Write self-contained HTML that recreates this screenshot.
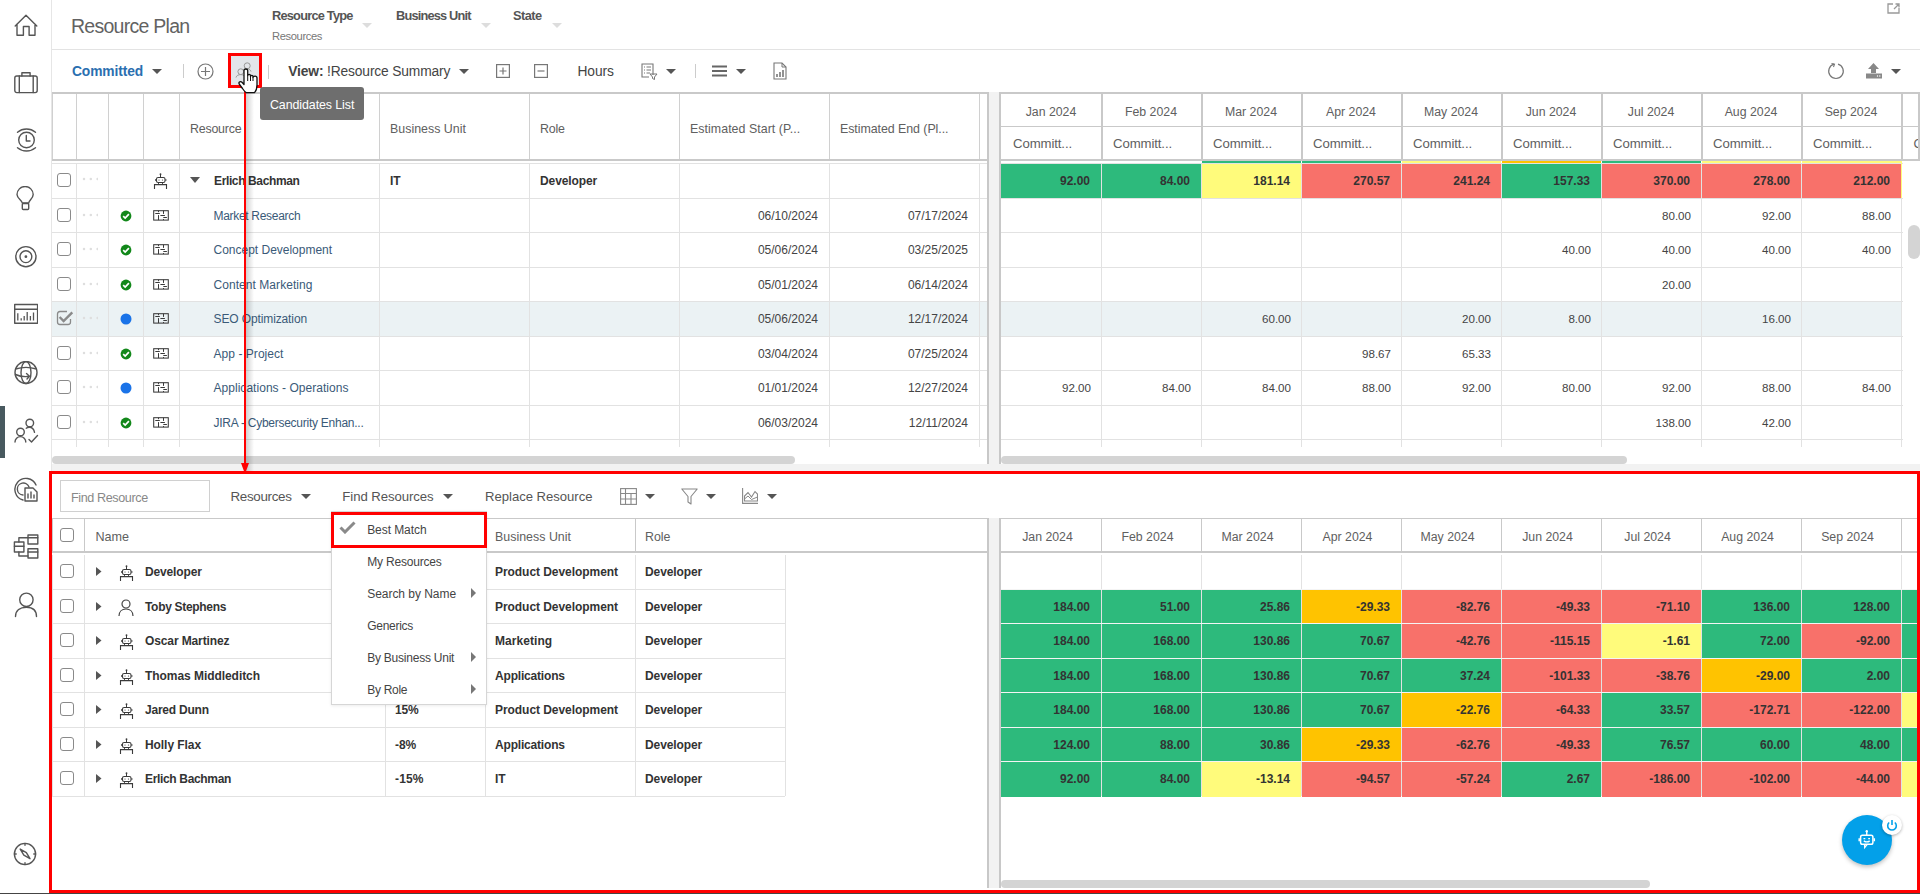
<!DOCTYPE html><html><head><meta charset="utf-8"><style>
*{margin:0;padding:0;box-sizing:border-box}
html,body{width:1920px;height:894px;overflow:hidden;background:#fff}
body{position:relative;font-family:"Liberation Sans",sans-serif;color:#333}
.a{position:absolute}
.t{white-space:nowrap;line-height:1}
.g{font-size:12.3px;color:#444}
.b{font-weight:bold;font-size:12px;letter-spacing:-0.2px;color:#333}
.lk{font-size:12px;letter-spacing:-0.2px;color:#3a5a78}
.cb{position:absolute;width:14px;height:14px;border:1.3px solid #8a8a8a;border-radius:3px;background:#fff}
</style></head><body>
<div class="a" style="left:51px;top:0px;width:1px;height:894px;background:#e6e6e6"></div>
<div class="a" style="left:0px;top:406px;width:5px;height:52px;background:#48595f"></div>
<svg class="a" style="left:14px;top:14px;" width="24" height="24" viewBox="0 0 24 24"><path d="M1.2 12L12 1.2L22.8 12M3 10V21.3H9.4V12.5H15.1V21.3H21V10" fill="none" stroke="#555" stroke-width="1.4" stroke-linejoin="round" stroke-linecap="round"/></svg>
<svg class="a" style="left:14px;top:71px;" width="24" height="24" viewBox="0 0 24 24"><rect x="0.8" y="5" width="22.4" height="16.6" rx="2" fill="none" stroke="#555" stroke-width="1.4" stroke-linejoin="round" stroke-linecap="round"/><path d="M7.9 5V1.8H16.1V5M5.3 5V21.6M19.2 5V21.6" fill="none" stroke="#555" stroke-width="1.4" stroke-linejoin="round" stroke-linecap="round"/></svg>
<svg class="a" style="left:14px;top:128px;" width="26" height="26" viewBox="0 0 26 26"><circle cx="12.5" cy="12" r="7.8" fill="none" stroke="#555" stroke-width="1.4" stroke-linejoin="round" stroke-linecap="round"/><path d="M12.3 7.5V13H16" fill="none" stroke="#555" stroke-width="1.4" stroke-linejoin="round" stroke-linecap="round"/><path d="M3.5 4.3A14 14 0 0 1 21.5 4.3M3.5 19.7A14 14 0 0 0 21.5 19.7" fill="none" stroke="#555" stroke-width="1.4" stroke-linejoin="round" stroke-linecap="round"/></svg>
<svg class="a" style="left:14px;top:186px;" width="24" height="26" viewBox="0 0 24 26"><path d="M8.3 17C8.3 14.5 3 12.5 3 8.6A8.1 8.1 0 0 1 19.2 8.6C19.2 12.5 14.7 14.5 14.7 17Z" fill="none" stroke="#555" stroke-width="1.4" stroke-linejoin="round" stroke-linecap="round"/><rect x="8.3" y="17.5" width="6.4" height="6" rx="1" fill="none" stroke="#555" stroke-width="1.4" stroke-linejoin="round" stroke-linecap="round"/></svg>
<svg class="a" style="left:14px;top:245px;" width="24" height="24" viewBox="0 0 24 24"><circle cx="11.9" cy="11.7" r="10.1" fill="none" stroke="#555" stroke-width="1.4" stroke-linejoin="round" stroke-linecap="round"/><circle cx="11.9" cy="11.7" r="5.9" fill="none" stroke="#555" stroke-width="1.4" stroke-linejoin="round" stroke-linecap="round"/><circle cx="11.9" cy="11.7" r="1.4" fill="#555"/></svg>
<svg class="a" style="left:14px;top:303px;" width="24" height="22" viewBox="0 0 24 22"><rect x="0.7" y="1.5" width="22.9" height="18.7" fill="none" stroke="#555" stroke-width="1.4" stroke-linejoin="round" stroke-linecap="round"/><path d="M0.7 6.3H23.6" fill="none" stroke="#555" stroke-width="1.4" stroke-linejoin="round" stroke-linecap="round"/><path d="M3.8 17.5V10.2M7.2 17.5V15.2M10.2 17.5V13M13.2 17.5V9M16.4 17.5V13M19.5 17.5V9.5" fill="none" stroke="#555" stroke-width="1.3"/></svg>
<svg class="a" style="left:14px;top:361px;" width="24" height="24" viewBox="0 0 24 24"><circle cx="12" cy="11.5" r="11" fill="none" stroke="#555" stroke-width="1.4" stroke-linejoin="round" stroke-linecap="round"/><ellipse cx="12" cy="11.5" rx="5" ry="11" fill="none" stroke="#555" stroke-width="1.4" stroke-linejoin="round" stroke-linecap="round" stroke-width="1.3"/><path d="M1.6 8Q12 4.8 22.4 8M1.5 13.5Q8 16.5 15.5 15.3M12.5 12.6L15.5 15.3L13 18" fill="none" stroke="#555" stroke-width="1.4" stroke-linejoin="round" stroke-linecap="round" stroke-width="1.3"/></svg>
<svg class="a" style="left:14px;top:417px;" width="26" height="27" viewBox="0 0 26 27"><circle cx="6.5" cy="15" r="3.8" fill="none" stroke="#555" stroke-width="1.4" stroke-linejoin="round" stroke-linecap="round"/><circle cx="15.8" cy="6" r="3.8" fill="none" stroke="#555" stroke-width="1.4" stroke-linejoin="round" stroke-linecap="round"/><path d="M1 25A5.3 5.3 0 0 1 11.8 25M12.2 11.2C13 10.6 14 10.2 15.2 10.2C17.8 10.2 20 12.2 20.5 15.3M15 22.5L17.5 25L23.5 18.5" fill="none" stroke="#555" stroke-width="1.4" stroke-linejoin="round" stroke-linecap="round"/></svg>
<svg class="a" style="left:13px;top:477px;" width="26" height="26" viewBox="0 0 26 26"><path d="M10 23A11 11 0 1 1 23 8" fill="none" stroke="#555" stroke-width="1.4" stroke-linejoin="round" stroke-linecap="round"/><path d="M10 18A6 6 0 1 1 16 10" fill="none" stroke="#555" stroke-width="1.4" stroke-linejoin="round" stroke-linecap="round"/><path d="M12 11H20L24 15V24H12Z" fill="none" stroke="#555" stroke-width="1.4" stroke-linejoin="round" stroke-linecap="round"/><path d="M15 21V17M18 21V15M21 21V18" fill="none" stroke="#555" stroke-width="1.4" stroke-linejoin="round" stroke-linecap="round" stroke-width="1.4"/></svg>
<svg class="a" style="left:13px;top:534px;" width="26" height="26" viewBox="0 0 26 26"><rect x="1.4" y="8" width="9.5" height="10" fill="none" stroke="#555" stroke-width="1.4" stroke-linejoin="round" stroke-linecap="round"/><rect x="15" y="1" width="9.8" height="9" fill="none" stroke="#555" stroke-width="1.4" stroke-linejoin="round" stroke-linecap="round"/><rect x="15" y="14.7" width="9.8" height="9.3" fill="none" stroke="#555" stroke-width="1.4" stroke-linejoin="round" stroke-linecap="round"/><path d="M1.4 12.2H10.9M15 3.8H24.8M15 18H24.8M5.9 8V3.8H15M5.9 18V22H15" fill="none" stroke="#555" stroke-width="1.4" stroke-linejoin="round" stroke-linecap="round" stroke-width="1.3"/></svg>
<svg class="a" style="left:14px;top:587px;" width="24" height="31" viewBox="0 0 24 31"><circle cx="12.4" cy="12.8" r="6.7" fill="none" stroke="#555" stroke-width="1.4" stroke-linejoin="round" stroke-linecap="round"/><path d="M1.5 29.6C1.5 23.5 6 20.3 12.4 20.3C18.8 20.3 22.5 23.5 22.5 29.6" fill="none" stroke="#555" stroke-width="1.4" stroke-linejoin="round" stroke-linecap="round"/></svg>
<svg class="a" style="left:13px;top:842px;" width="24" height="24" viewBox="0 0 24 24"><circle cx="12" cy="12" r="10.6" fill="none" stroke="#555" stroke-width="1.4" stroke-linejoin="round" stroke-linecap="round" stroke-width="1.4"/><path d="M12 1.4V3.2M12 20.8V22.6M1.4 12H3.2M20.8 12H22.6" fill="none" stroke="#555" stroke-width="1.4" stroke-linejoin="round" stroke-linecap="round" stroke-width="1.3"/><path d="M7.2 7.1L10.84 13.18L17 16.7L13.36 10.62Z" fill="none" stroke="#555" stroke-width="1.4" stroke-linejoin="round" stroke-linecap="round" stroke-width="1.3"/></svg>
<div class="a" style="left:52px;top:49px;width:1868px;height:1px;background:#e3e3e3"></div>
<div class="a t " style="left:71px;top:17.00px;font-size:19.5px;color:#626262;letter-spacing:-0.731px">Resource Plan</div>
<div class="a t " style="left:272px;top:10.00px;font-size:12.8px;font-weight:bold;color:#555;letter-spacing:-0.784px">Resource Type</div>
<div class="a t " style="left:272px;top:31.00px;font-size:11.2px;color:#777;letter-spacing:-0.387px">Resources</div>
<svg class="a" style="left:362.0px;top:23.0px;" width="10" height="5" viewBox="0 0 10 5"><path d="M0 0H10L5.0 5Z" fill="#ddd"/></svg>
<div class="a t " style="left:396px;top:10.00px;font-size:12.8px;font-weight:bold;color:#555;letter-spacing:-0.819px">Business Unit</div>
<svg class="a" style="left:481.0px;top:23.0px;" width="10" height="5" viewBox="0 0 10 5"><path d="M0 0H10L5.0 5Z" fill="#ddd"/></svg>
<div class="a t " style="left:513px;top:10.00px;font-size:12.8px;font-weight:bold;color:#555;letter-spacing:-0.519px">State</div>
<svg class="a" style="left:552.0px;top:23.0px;" width="10" height="5" viewBox="0 0 10 5"><path d="M0 0H10L5.0 5Z" fill="#ddd"/></svg>
<svg class="a" style="left:1887px;top:3px;" width="13" height="11" viewBox="0 0 13 11"><path d="M6 1H1V10H12V5M7 6L12 1M8.5 1H12V4.5" fill="none" stroke="#999" stroke-width="1.3"/></svg>
<div class="a t " style="left:72px;top:65.00px;font-size:13.8px;font-weight:bold;color:#2a6fb0;letter-spacing:-0.096px">Committed</div>
<svg class="a" style="left:152.0px;top:68.5px;" width="10" height="5" viewBox="0 0 10 5"><path d="M0 0H10L5.0 5Z" fill="#555"/></svg>
<div class="a" style="left:183px;top:64px;width:1px;height:14px;background:#ccc"></div>
<svg class="a" style="left:197px;top:63px;" width="17" height="17" viewBox="0 0 17 17"><circle cx="8.5" cy="8.5" r="7.5" fill="none" stroke="#777" stroke-width="1.2"/><path d="M8.5 4V13M4 8.5H13" stroke="#777" stroke-width="1.2"/></svg>
<div class="a" style="left:231px;top:56px;width:28px;height:29px;background:#e3e5ea"></div>
<svg class="a" style="left:234px;top:60px;" width="20" height="20" viewBox="0 0 20 20"><circle cx="13.2" cy="5.8" r="3" fill="none" stroke="#999" stroke-width="1"/><circle cx="6.8" cy="11.7" r="2.9" fill="none" stroke="#999" stroke-width="1"/><path d="M2 17.5C2.5 15.5 4.5 14.6 6.8 14.6C8 14.6 9 15 9.8 15.5M9.5 10.5C10.5 9.3 11.8 8.8 13.2 8.8C15 8.8 16.5 9.8 17 11.5" fill="none" stroke="#999" stroke-width="1"/></svg>
<div class="a" style="left:268px;top:65px;width:1px;height:14px;background:#ccc"></div>
<div class="a t " style="left:288.3px;top:65.00px;font-size:13.8px;color:#444;letter-spacing:-0.147px"><b>View:</b> !Resource Summary</div>
<svg class="a" style="left:459.0px;top:68.5px;" width="10" height="5" viewBox="0 0 10 5"><path d="M0 0H10L5.0 5Z" fill="#555"/></svg>
<svg class="a" style="left:496px;top:64px;" width="14" height="14" viewBox="0 0 14 14"><rect x="0.6" y="0.6" width="12.8" height="12.8" fill="none" stroke="#777" stroke-width="1.2"/><path d="M7 3.5V10.5M3.5 7H10.5" stroke="#777" stroke-width="1.2"/></svg>
<svg class="a" style="left:534px;top:64px;" width="14" height="14" viewBox="0 0 14 14"><rect x="0.6" y="0.6" width="12.8" height="12.8" fill="none" stroke="#777" stroke-width="1.2"/><path d="M3.5 7H10.5" stroke="#777" stroke-width="1.2"/></svg>
<div class="a t " style="left:577.5px;top:65.00px;font-size:13.8px;color:#444;letter-spacing:-0.113px">Hours</div>
<svg class="a" style="left:641px;top:63px;" width="17" height="17" viewBox="0 0 17 17"><path d="M12 12V1H1V14H8" fill="none" stroke="#777" stroke-width="1.1"/><path d="M3 4H4M5.5 4H10M3 7H4M5.5 7H10M3 10H4M5.5 10H9" stroke="#777" stroke-width="1"/><path d="M9 11H16L13.5 14V16.5L11.5 15.5V14Z" fill="none" stroke="#777" stroke-width="1"/></svg>
<svg class="a" style="left:666.0px;top:68.5px;" width="10" height="5" viewBox="0 0 10 5"><path d="M0 0H10L5.0 5Z" fill="#555"/></svg>
<div class="a" style="left:695px;top:64px;width:1px;height:14px;background:#ccc"></div>
<svg class="a" style="left:712px;top:65px;" width="15" height="12" viewBox="0 0 15 12"><path d="M0 1.5H15M0 6H15M0 10.5H15" stroke="#666" stroke-width="1.8"/></svg>
<svg class="a" style="left:736.0px;top:68.5px;" width="10" height="5" viewBox="0 0 10 5"><path d="M0 0H10L5.0 5Z" fill="#555"/></svg>
<svg class="a" style="left:773px;top:62px;" width="14" height="18" viewBox="0 0 14 18"><path d="M1 1H9L13 5V17H1Z" fill="none" stroke="#777" stroke-width="1.1"/><path d="M9 1V5H13" fill="none" stroke="#777" stroke-width="1"/><path d="M4 15V12M7 15V10M10 15V8" stroke="#777" stroke-width="1.6"/></svg>
<svg class="a" style="left:1827px;top:62px;" width="18" height="18" viewBox="0 0 18 18"><path d="M7 2.2A7.3 7.3 0 1 0 11 2.2" fill="none" stroke="#777" stroke-width="1.2"/><path d="M4.5 1.5L7.5 2.2L6.5 5" fill="none" stroke="#777" stroke-width="1.1"/></svg>
<svg class="a" style="left:1865px;top:63px;" width="18" height="16" viewBox="0 0 18 16"><path d="M8.5 0L14 6H11V10H6V6H3Z" fill="#888"/><rect x="1" y="10.5" width="16" height="5" fill="#888"/><circle cx="12.5" cy="13" r="0.7" fill="#fff"/><circle cx="14.8" cy="13" r="0.7" fill="#fff"/></svg>
<svg class="a" style="left:1891.0px;top:68.5px;" width="10" height="5" viewBox="0 0 10 5"><path d="M0 0H10L5.0 5Z" fill="#555"/></svg>
<div class="a" style="left:52px;top:302px;width:935px;height:34px;background:#ebf2f4"></div>
<div class="a" style="left:1001px;top:302px;width:900px;height:34px;background:#ebf2f4"></div>
<div class="a" style="left:52px;top:92px;width:1868px;height:2px;background:#c9c9c9"></div>
<div class="a" style="left:52px;top:94px;width:1px;height:66px;background:#d0d0d0"></div>
<div class="a" style="left:76px;top:94px;width:1px;height:66px;background:#d0d0d0"></div>
<div class="a" style="left:108px;top:94px;width:1px;height:66px;background:#d0d0d0"></div>
<div class="a" style="left:143px;top:94px;width:1px;height:66px;background:#d0d0d0"></div>
<div class="a" style="left:179px;top:94px;width:1px;height:66px;background:#d0d0d0"></div>
<div class="a" style="left:379px;top:94px;width:1px;height:66px;background:#d0d0d0"></div>
<div class="a" style="left:529px;top:94px;width:1px;height:66px;background:#d0d0d0"></div>
<div class="a" style="left:679px;top:94px;width:1px;height:66px;background:#d0d0d0"></div>
<div class="a" style="left:829px;top:94px;width:1px;height:66px;background:#d0d0d0"></div>
<div class="a" style="left:979px;top:94px;width:1px;height:66px;background:#d0d0d0"></div>
<div class="a" style="left:52px;top:159px;width:935px;height:2px;background:#c9c9c9"></div>
<div class="a" style="left:52px;top:163px;width:935px;height:1px;background:#e2e2e2"></div>
<div class="a" style="left:52px;top:198px;width:935px;height:1px;background:#e2e2e2"></div>
<div class="a" style="left:52px;top:232px;width:935px;height:1px;background:#e2e2e2"></div>
<div class="a" style="left:52px;top:267px;width:935px;height:1px;background:#e2e2e2"></div>
<div class="a" style="left:52px;top:301px;width:935px;height:1px;background:#e2e2e2"></div>
<div class="a" style="left:52px;top:336px;width:935px;height:1px;background:#e2e2e2"></div>
<div class="a" style="left:52px;top:370px;width:935px;height:1px;background:#e2e2e2"></div>
<div class="a" style="left:52px;top:405px;width:935px;height:1px;background:#e2e2e2"></div>
<div class="a" style="left:52px;top:439px;width:935px;height:1px;background:#e2e2e2"></div>
<div class="a" style="left:76px;top:163px;width:1px;height:284px;background:#e2e2e2"></div>
<div class="a" style="left:108px;top:163px;width:1px;height:284px;background:#e2e2e2"></div>
<div class="a" style="left:143px;top:163px;width:1px;height:284px;background:#e2e2e2"></div>
<div class="a" style="left:179px;top:163px;width:1px;height:284px;background:#e2e2e2"></div>
<div class="a" style="left:379px;top:163px;width:1px;height:284px;background:#e2e2e2"></div>
<div class="a" style="left:529px;top:163px;width:1px;height:284px;background:#e2e2e2"></div>
<div class="a" style="left:679px;top:163px;width:1px;height:284px;background:#e2e2e2"></div>
<div class="a" style="left:829px;top:163px;width:1px;height:284px;background:#e2e2e2"></div>
<div class="a" style="left:979px;top:163px;width:1px;height:284px;background:#e2e2e2"></div>
<div class="a" style="left:987px;top:92px;width:2px;height:372px;background:#c8c8c8"></div>
<div class="a" style="left:989px;top:92px;width:10px;height:380px;background:#f2f2f2"></div>
<div class="a" style="left:999px;top:92px;width:2px;height:372px;background:#c8c8c8"></div>
<div class="a t " style="left:190px;top:123.00px;font-size:12.4px;color:#606060;letter-spacing:-0.216px">Resource</div>
<div class="a t " style="left:390px;top:123.00px;font-size:12.4px;color:#606060;letter-spacing:0.010px">Business Unit</div>
<div class="a t " style="left:540px;top:123.00px;font-size:12.4px;color:#606060;letter-spacing:-0.196px">Role</div>
<div class="a t " style="left:690px;top:123.00px;font-size:12.4px;color:#606060;letter-spacing:0.044px">Estimated Start (P...</div>
<div class="a t " style="left:840px;top:123.00px;font-size:12.4px;color:#606060;letter-spacing:-0.050px">Estimated End (Pl...</div>
<div class="cb" style="left:57px;top:173px"></div>
<svg class="a" style="left:82px;top:177px;" width="16" height="4" viewBox="0 0 16 4"><circle cx="2" cy="2" r="1.25" fill="#dedede"/><circle cx="8.8" cy="2" r="1.25" fill="#dedede"/><circle cx="15.6" cy="2" r="1.25" fill="#dedede"/></svg>
<svg class="a" style="left:152px;top:172px;" width="17" height="18" viewBox="0 0 17 18"><circle cx="8.5" cy="2.2" r="0.9" fill="#3a3a3a"/><path d="M8.5 2.5V5.2" stroke="#3a3a3a" stroke-width="1"/><rect x="4.5" y="5.5" width="8.5" height="5" rx="1.6" fill="none" stroke="#3a3a3a" stroke-width="1.1"/><path d="M3.6 7.2V8.8M13.9 7.2V8.8" stroke="#3a3a3a" stroke-width="1.1"/><circle cx="7" cy="8" r="0.6" fill="#3a3a3a"/><circle cx="10.5" cy="8" r="0.6" fill="#3a3a3a"/><path d="M6.5 10.5V12.5M10.5 10.5V12.5" stroke="#3a3a3a" stroke-width="0.9"/><path d="M2.5 17V12.6H14.5V17" fill="none" stroke="#3a3a3a" stroke-width="1.1"/></svg>
<svg class="a" style="left:189.5px;top:177.0px;" width="10" height="6" viewBox="0 0 10 6"><path d="M0 0H10L5.0 6Z" fill="#555"/></svg>
<div class="a t b" style="left:214px;top:175.00px;font-size:12px;;letter-spacing:-0.372px">Erlich Bachman</div>
<div class="a t b" style="left:390px;top:175.00px;font-size:12px;">IT</div>
<div class="a t b" style="left:540px;top:175.00px;font-size:12px;;letter-spacing:-0.092px">Developer</div>
<div class="cb" style="left:57px;top:208px"></div>
<svg class="a" style="left:82px;top:212.5px;" width="16" height="4" viewBox="0 0 16 4"><circle cx="2" cy="2" r="1.25" fill="#dedede"/><circle cx="8.8" cy="2" r="1.25" fill="#dedede"/><circle cx="15.6" cy="2" r="1.25" fill="#dedede"/></svg>
<svg class="a" style="left:119.5px;top:209.5px;" width="12" height="12" viewBox="0 0 12 12"><circle cx="6" cy="6" r="5.4" fill="#12881a"/><path d="M3.2 6.2L5.2 8.1L8.9 4.2" fill="none" stroke="#fff" stroke-width="1.7"/></svg>
<svg class="a" style="left:152px;top:208px;" width="18" height="14" viewBox="0 0 18 14"><rect x="1.7" y="2.7" width="14.6" height="9.4" fill="none" stroke="#3a3a3a" stroke-width="1.05"/><path d="M3.3 5.5H7.8M6.5 7.1V12.1M6.5 2.7V4.2M11.5 2.7V5.9M8.4 7.5H12.9M11.3 9.5H14.9M11.5 11V12.1" fill="none" stroke="#3a3a3a" stroke-width="1"/></svg>
<div class="a t lk" style="left:213.5px;top:210.00px;font-size:12px;;letter-spacing:-0.305px">Market Research</div>
<div class="a t " style="right:1102px;top:210.00px;font-size:12px;color:#444">06/10/2024</div>
<div class="a t " style="right:952px;top:210.00px;font-size:12px;color:#444">07/17/2024</div>
<div class="cb" style="left:57px;top:242px"></div>
<svg class="a" style="left:82px;top:246.5px;" width="16" height="4" viewBox="0 0 16 4"><circle cx="2" cy="2" r="1.25" fill="#dedede"/><circle cx="8.8" cy="2" r="1.25" fill="#dedede"/><circle cx="15.6" cy="2" r="1.25" fill="#dedede"/></svg>
<svg class="a" style="left:119.5px;top:243.5px;" width="12" height="12" viewBox="0 0 12 12"><circle cx="6" cy="6" r="5.4" fill="#12881a"/><path d="M3.2 6.2L5.2 8.1L8.9 4.2" fill="none" stroke="#fff" stroke-width="1.7"/></svg>
<svg class="a" style="left:152px;top:242px;" width="18" height="14" viewBox="0 0 18 14"><rect x="1.7" y="2.7" width="14.6" height="9.4" fill="none" stroke="#3a3a3a" stroke-width="1.05"/><path d="M3.3 5.5H7.8M6.5 7.1V12.1M6.5 2.7V4.2M11.5 2.7V5.9M8.4 7.5H12.9M11.3 9.5H14.9M11.5 11V12.1" fill="none" stroke="#3a3a3a" stroke-width="1"/></svg>
<div class="a t lk" style="left:213.5px;top:244.00px;font-size:12px;;letter-spacing:-0.007px">Concept Development</div>
<div class="a t " style="right:1102px;top:244.00px;font-size:12px;color:#444">05/06/2024</div>
<div class="a t " style="right:952px;top:244.00px;font-size:12px;color:#444">03/25/2025</div>
<div class="cb" style="left:57px;top:277px"></div>
<svg class="a" style="left:82px;top:281.5px;" width="16" height="4" viewBox="0 0 16 4"><circle cx="2" cy="2" r="1.25" fill="#dedede"/><circle cx="8.8" cy="2" r="1.25" fill="#dedede"/><circle cx="15.6" cy="2" r="1.25" fill="#dedede"/></svg>
<svg class="a" style="left:119.5px;top:278.5px;" width="12" height="12" viewBox="0 0 12 12"><circle cx="6" cy="6" r="5.4" fill="#12881a"/><path d="M3.2 6.2L5.2 8.1L8.9 4.2" fill="none" stroke="#fff" stroke-width="1.7"/></svg>
<svg class="a" style="left:152px;top:277px;" width="18" height="14" viewBox="0 0 18 14"><rect x="1.7" y="2.7" width="14.6" height="9.4" fill="none" stroke="#3a3a3a" stroke-width="1.05"/><path d="M3.3 5.5H7.8M6.5 7.1V12.1M6.5 2.7V4.2M11.5 2.7V5.9M8.4 7.5H12.9M11.3 9.5H14.9M11.5 11V12.1" fill="none" stroke="#3a3a3a" stroke-width="1"/></svg>
<div class="a t lk" style="left:213.5px;top:279.00px;font-size:12px;;letter-spacing:0.055px">Content Marketing</div>
<div class="a t " style="right:1102px;top:279.00px;font-size:12px;color:#444">05/01/2024</div>
<div class="a t " style="right:952px;top:279.00px;font-size:12px;color:#444">06/14/2024</div>
<svg class="a" style="left:56px;top:310px;" width="18" height="17" viewBox="0 0 18 17"><path d="M11 1.5H4Q1.5 1.5 1.5 4V12Q1.5 14.5 4 14.5H12Q14.5 14.5 14.5 12V9" fill="none" stroke="#8a8a8a" stroke-width="1.3"/><path d="M3.6 7L7.6 11.1L16.3 2.3" fill="none" stroke="#8a8a8a" stroke-width="2.4"/></svg>
<svg class="a" style="left:82px;top:315.5px;" width="16" height="4" viewBox="0 0 16 4"><circle cx="2" cy="2" r="1.25" fill="#dedede"/><circle cx="8.8" cy="2" r="1.25" fill="#dedede"/><circle cx="15.6" cy="2" r="1.25" fill="#dedede"/></svg>
<svg class="a" style="left:119.5px;top:312.5px;" width="12" height="12" viewBox="0 0 12 12"><circle cx="6" cy="6" r="5.5" fill="#1a73e8"/></svg>
<svg class="a" style="left:152px;top:311px;" width="18" height="14" viewBox="0 0 18 14"><rect x="1.7" y="2.7" width="14.6" height="9.4" fill="none" stroke="#3a3a3a" stroke-width="1.05"/><path d="M3.3 5.5H7.8M6.5 7.1V12.1M6.5 2.7V4.2M11.5 2.7V5.9M8.4 7.5H12.9M11.3 9.5H14.9M11.5 11V12.1" fill="none" stroke="#3a3a3a" stroke-width="1"/></svg>
<div class="a t lk" style="left:213.5px;top:313.00px;font-size:12px;;letter-spacing:-0.117px">SEO Optimization</div>
<div class="a t " style="right:1102px;top:313.00px;font-size:12px;color:#444">05/06/2024</div>
<div class="a t " style="right:952px;top:313.00px;font-size:12px;color:#444">12/17/2024</div>
<div class="cb" style="left:57px;top:346px"></div>
<svg class="a" style="left:82px;top:350.5px;" width="16" height="4" viewBox="0 0 16 4"><circle cx="2" cy="2" r="1.25" fill="#dedede"/><circle cx="8.8" cy="2" r="1.25" fill="#dedede"/><circle cx="15.6" cy="2" r="1.25" fill="#dedede"/></svg>
<svg class="a" style="left:119.5px;top:347.5px;" width="12" height="12" viewBox="0 0 12 12"><circle cx="6" cy="6" r="5.4" fill="#12881a"/><path d="M3.2 6.2L5.2 8.1L8.9 4.2" fill="none" stroke="#fff" stroke-width="1.7"/></svg>
<svg class="a" style="left:152px;top:346px;" width="18" height="14" viewBox="0 0 18 14"><rect x="1.7" y="2.7" width="14.6" height="9.4" fill="none" stroke="#3a3a3a" stroke-width="1.05"/><path d="M3.3 5.5H7.8M6.5 7.1V12.1M6.5 2.7V4.2M11.5 2.7V5.9M8.4 7.5H12.9M11.3 9.5H14.9M11.5 11V12.1" fill="none" stroke="#3a3a3a" stroke-width="1"/></svg>
<div class="a t lk" style="left:213.5px;top:348.00px;font-size:12px;;letter-spacing:0.048px">App - Project</div>
<div class="a t " style="right:1102px;top:348.00px;font-size:12px;color:#444">03/04/2024</div>
<div class="a t " style="right:952px;top:348.00px;font-size:12px;color:#444">07/25/2024</div>
<div class="cb" style="left:57px;top:380px"></div>
<svg class="a" style="left:82px;top:384.5px;" width="16" height="4" viewBox="0 0 16 4"><circle cx="2" cy="2" r="1.25" fill="#dedede"/><circle cx="8.8" cy="2" r="1.25" fill="#dedede"/><circle cx="15.6" cy="2" r="1.25" fill="#dedede"/></svg>
<svg class="a" style="left:119.5px;top:381.5px;" width="12" height="12" viewBox="0 0 12 12"><circle cx="6" cy="6" r="5.5" fill="#1a73e8"/></svg>
<svg class="a" style="left:152px;top:380px;" width="18" height="14" viewBox="0 0 18 14"><rect x="1.7" y="2.7" width="14.6" height="9.4" fill="none" stroke="#3a3a3a" stroke-width="1.05"/><path d="M3.3 5.5H7.8M6.5 7.1V12.1M6.5 2.7V4.2M11.5 2.7V5.9M8.4 7.5H12.9M11.3 9.5H14.9M11.5 11V12.1" fill="none" stroke="#3a3a3a" stroke-width="1"/></svg>
<div class="a t lk" style="left:213.5px;top:382.00px;font-size:12px;;letter-spacing:0.037px">Applications - Operations</div>
<div class="a t " style="right:1102px;top:382.00px;font-size:12px;color:#444">01/01/2024</div>
<div class="a t " style="right:952px;top:382.00px;font-size:12px;color:#444">12/27/2024</div>
<div class="cb" style="left:57px;top:415px"></div>
<svg class="a" style="left:82px;top:419.5px;" width="16" height="4" viewBox="0 0 16 4"><circle cx="2" cy="2" r="1.25" fill="#dedede"/><circle cx="8.8" cy="2" r="1.25" fill="#dedede"/><circle cx="15.6" cy="2" r="1.25" fill="#dedede"/></svg>
<svg class="a" style="left:119.5px;top:416.5px;" width="12" height="12" viewBox="0 0 12 12"><circle cx="6" cy="6" r="5.4" fill="#12881a"/><path d="M3.2 6.2L5.2 8.1L8.9 4.2" fill="none" stroke="#fff" stroke-width="1.7"/></svg>
<svg class="a" style="left:152px;top:415px;" width="18" height="14" viewBox="0 0 18 14"><rect x="1.7" y="2.7" width="14.6" height="9.4" fill="none" stroke="#3a3a3a" stroke-width="1.05"/><path d="M3.3 5.5H7.8M6.5 7.1V12.1M6.5 2.7V4.2M11.5 2.7V5.9M8.4 7.5H12.9M11.3 9.5H14.9M11.5 11V12.1" fill="none" stroke="#3a3a3a" stroke-width="1"/></svg>
<div class="a t lk" style="left:213.5px;top:417.00px;font-size:12px;;letter-spacing:-0.255px">JIRA - Cybersecurity Enhan...</div>
<div class="a t " style="right:1102px;top:417.00px;font-size:12px;color:#444">06/03/2024</div>
<div class="a t " style="right:952px;top:417.00px;font-size:12px;color:#444">12/11/2024</div>
<div class="a" style="left:52px;top:464px;width:1868px;height:7px;background:#f2f2f2"></div>
<div class="a" style="left:52px;top:456px;width:743px;height:8px;background:#d4d4d4;border-radius:4px"></div>
<div class="a" style="left:1001px;top:456px;width:626px;height:8px;background:#d4d4d4;border-radius:4px"></div>
<div class="a" style="left:1101px;top:94px;width:2px;height:66px;background:#c9c9c9"></div>
<div class="a" style="left:1201px;top:94px;width:2px;height:66px;background:#c9c9c9"></div>
<div class="a" style="left:1301px;top:94px;width:2px;height:66px;background:#c9c9c9"></div>
<div class="a" style="left:1401px;top:94px;width:2px;height:66px;background:#c9c9c9"></div>
<div class="a" style="left:1501px;top:94px;width:2px;height:66px;background:#c9c9c9"></div>
<div class="a" style="left:1601px;top:94px;width:2px;height:66px;background:#c9c9c9"></div>
<div class="a" style="left:1701px;top:94px;width:2px;height:66px;background:#c9c9c9"></div>
<div class="a" style="left:1801px;top:94px;width:2px;height:66px;background:#c9c9c9"></div>
<div class="a" style="left:1901px;top:94px;width:2px;height:66px;background:#c9c9c9"></div>
<div class="a" style="left:1001px;top:126px;width:919px;height:1px;background:#c9c9c9"></div>
<div class="a" style="left:1001px;top:159px;width:919px;height:2px;background:#c9c9c9"></div>
<div class="a t " style="left:951px;width:200px;text-align:center;top:106.00px;font-size:12.3px;color:#606060">Jan 2024</div>
<div class="a t " style="left:1013px;top:137.00px;font-size:13.2px;color:#606060;letter-spacing:-0.108px">Committ...</div>
<div class="a t " style="left:1051px;width:200px;text-align:center;top:106.00px;font-size:12.3px;color:#606060">Feb 2024</div>
<div class="a t " style="left:1113px;top:137.00px;font-size:13.2px;color:#606060;letter-spacing:-0.108px">Committ...</div>
<div class="a t " style="left:1151px;width:200px;text-align:center;top:106.00px;font-size:12.3px;color:#606060">Mar 2024</div>
<div class="a t " style="left:1213px;top:137.00px;font-size:13.2px;color:#606060;letter-spacing:-0.108px">Committ...</div>
<div class="a t " style="left:1251px;width:200px;text-align:center;top:106.00px;font-size:12.3px;color:#606060">Apr 2024</div>
<div class="a t " style="left:1313px;top:137.00px;font-size:13.2px;color:#606060;letter-spacing:-0.108px">Committ...</div>
<div class="a t " style="left:1351px;width:200px;text-align:center;top:106.00px;font-size:12.3px;color:#606060">May 2024</div>
<div class="a t " style="left:1413px;top:137.00px;font-size:13.2px;color:#606060;letter-spacing:-0.108px">Committ...</div>
<div class="a t " style="left:1451px;width:200px;text-align:center;top:106.00px;font-size:12.3px;color:#606060">Jun 2024</div>
<div class="a t " style="left:1513px;top:137.00px;font-size:13.2px;color:#606060;letter-spacing:-0.108px">Committ...</div>
<div class="a t " style="left:1551px;width:200px;text-align:center;top:106.00px;font-size:12.3px;color:#606060">Jul 2024</div>
<div class="a t " style="left:1613px;top:137.00px;font-size:13.2px;color:#606060;letter-spacing:-0.108px">Committ...</div>
<div class="a t " style="left:1651px;width:200px;text-align:center;top:106.00px;font-size:12.3px;color:#606060">Aug 2024</div>
<div class="a t " style="left:1713px;top:137.00px;font-size:13.2px;color:#606060;letter-spacing:-0.108px">Committ...</div>
<div class="a t " style="left:1751px;width:200px;text-align:center;top:106.00px;font-size:12.3px;color:#606060">Sep 2024</div>
<div class="a t " style="left:1813px;top:137.00px;font-size:13.2px;color:#606060;letter-spacing:-0.108px">Committ...</div>
<div class="a t " style="left:1913.5px;top:138.00px;font-size:12.6px;color:#606060">C</div>
<div class="a" style="left:1918px;top:92px;width:2px;height:69px;background:#c9c9c9"></div>
<div class="a" style="left:1001px;top:163px;width:902px;height:1px;background:#e2e2e2"></div>
<div class="a" style="left:1001px;top:198px;width:902px;height:1px;background:#e2e2e2"></div>
<div class="a" style="left:1001px;top:232px;width:902px;height:1px;background:#e2e2e2"></div>
<div class="a" style="left:1001px;top:267px;width:902px;height:1px;background:#e2e2e2"></div>
<div class="a" style="left:1001px;top:301px;width:902px;height:1px;background:#e2e2e2"></div>
<div class="a" style="left:1001px;top:336px;width:902px;height:1px;background:#e2e2e2"></div>
<div class="a" style="left:1001px;top:370px;width:902px;height:1px;background:#e2e2e2"></div>
<div class="a" style="left:1001px;top:405px;width:902px;height:1px;background:#e2e2e2"></div>
<div class="a" style="left:1001px;top:439px;width:902px;height:1px;background:#e2e2e2"></div>
<div class="a" style="left:1101px;top:163px;width:1px;height:284px;background:#e2e2e2"></div>
<div class="a" style="left:1201px;top:163px;width:1px;height:284px;background:#e2e2e2"></div>
<div class="a" style="left:1301px;top:163px;width:1px;height:284px;background:#e2e2e2"></div>
<div class="a" style="left:1401px;top:163px;width:1px;height:284px;background:#e2e2e2"></div>
<div class="a" style="left:1501px;top:163px;width:1px;height:284px;background:#e2e2e2"></div>
<div class="a" style="left:1601px;top:163px;width:1px;height:284px;background:#e2e2e2"></div>
<div class="a" style="left:1701px;top:163px;width:1px;height:284px;background:#e2e2e2"></div>
<div class="a" style="left:1801px;top:163px;width:1px;height:284px;background:#e2e2e2"></div>
<div class="a" style="left:1901px;top:163px;width:1px;height:284px;background:#e2e2e2"></div>
<div class="a" style="left:1001px;top:164px;width:100px;height:34px;background:#2dba7c"></div>
<div class="a t b" style="right:830px;top:175.00px;font-size:12px;letter-spacing:0">92.00</div>
<div class="a" style="left:1102px;top:164px;width:99px;height:34px;background:#2dba7c"></div>
<div class="a t b" style="right:730px;top:175.00px;font-size:12px;letter-spacing:0">84.00</div>
<div class="a" style="left:1202px;top:164px;width:99px;height:34px;background:#fffb7b"></div>
<div class="a" style="left:1202px;top:161px;width:99px;height:2px;background:#2dba7c"></div>
<div class="a t b" style="right:630px;top:175.00px;font-size:12px;letter-spacing:0">181.14</div>
<div class="a" style="left:1302px;top:164px;width:99px;height:34px;background:#f8716a"></div>
<div class="a" style="left:1302px;top:161px;width:99px;height:2px;background:#2dba7c"></div>
<div class="a t b" style="right:530px;top:175.00px;font-size:12px;letter-spacing:0">270.57</div>
<div class="a" style="left:1402px;top:164px;width:99px;height:34px;background:#f8716a"></div>
<div class="a" style="left:1402px;top:161px;width:99px;height:2px;background:#fffb7b"></div>
<div class="a t b" style="right:430px;top:175.00px;font-size:12px;letter-spacing:0">241.24</div>
<div class="a" style="left:1502px;top:164px;width:99px;height:34px;background:#2dba7c"></div>
<div class="a" style="left:1502px;top:161px;width:99px;height:2px;background:#ffc300"></div>
<div class="a t b" style="right:330px;top:175.00px;font-size:12px;letter-spacing:0">157.33</div>
<div class="a" style="left:1602px;top:164px;width:99px;height:34px;background:#f8716a"></div>
<div class="a" style="left:1602px;top:161px;width:99px;height:2px;background:#2dba7c"></div>
<div class="a t b" style="right:230px;top:175.00px;font-size:12px;letter-spacing:0">370.00</div>
<div class="a" style="left:1702px;top:164px;width:99px;height:34px;background:#f8716a"></div>
<div class="a" style="left:1702px;top:161px;width:99px;height:2px;background:#fffb7b"></div>
<div class="a t b" style="right:130px;top:175.00px;font-size:12px;letter-spacing:0">278.00</div>
<div class="a" style="left:1802px;top:164px;width:99px;height:34px;background:#f8716a"></div>
<div class="a" style="left:1802px;top:161px;width:99px;height:2px;background:#fffb7b"></div>
<div class="a t b" style="right:30px;top:175.00px;font-size:12px;letter-spacing:0">212.00</div>
<div class="a" style="left:1901px;top:161px;width:1px;height:37px;background:#fffb7b"></div>
<div class="a t " style="right:229px;top:210.00px;font-size:11.6px;color:#444">80.00</div>
<div class="a t " style="right:129px;top:210.00px;font-size:11.6px;color:#444">92.00</div>
<div class="a t " style="right:29px;top:210.00px;font-size:11.6px;color:#444">88.00</div>
<div class="a t " style="right:329px;top:244.00px;font-size:11.6px;color:#444">40.00</div>
<div class="a t " style="right:229px;top:244.00px;font-size:11.6px;color:#444">40.00</div>
<div class="a t " style="right:129px;top:244.00px;font-size:11.6px;color:#444">40.00</div>
<div class="a t " style="right:29px;top:244.00px;font-size:11.6px;color:#444">40.00</div>
<div class="a t " style="right:229px;top:279.00px;font-size:11.6px;color:#444">20.00</div>
<div class="a t " style="right:629px;top:313.00px;font-size:11.6px;color:#444">60.00</div>
<div class="a t " style="right:429px;top:313.00px;font-size:11.6px;color:#444">20.00</div>
<div class="a t " style="right:329px;top:313.00px;font-size:11.6px;color:#444">8.00</div>
<div class="a t " style="right:129px;top:313.00px;font-size:11.6px;color:#444">16.00</div>
<div class="a t " style="right:529px;top:348.00px;font-size:11.6px;color:#444">98.67</div>
<div class="a t " style="right:429px;top:348.00px;font-size:11.6px;color:#444">65.33</div>
<div class="a t " style="right:829px;top:382.00px;font-size:11.6px;color:#444">92.00</div>
<div class="a t " style="right:729px;top:382.00px;font-size:11.6px;color:#444">84.00</div>
<div class="a t " style="right:629px;top:382.00px;font-size:11.6px;color:#444">84.00</div>
<div class="a t " style="right:529px;top:382.00px;font-size:11.6px;color:#444">88.00</div>
<div class="a t " style="right:429px;top:382.00px;font-size:11.6px;color:#444">92.00</div>
<div class="a t " style="right:329px;top:382.00px;font-size:11.6px;color:#444">80.00</div>
<div class="a t " style="right:229px;top:382.00px;font-size:11.6px;color:#444">92.00</div>
<div class="a t " style="right:129px;top:382.00px;font-size:11.6px;color:#444">88.00</div>
<div class="a t " style="right:29px;top:382.00px;font-size:11.6px;color:#444">84.00</div>
<div class="a t " style="right:229px;top:417.00px;font-size:11.6px;color:#444">138.00</div>
<div class="a t " style="right:129px;top:417.00px;font-size:11.6px;color:#444">42.00</div>
<div class="a" style="left:1908px;top:225px;width:12px;height:34px;background:#d4d4d4;border-radius:6px"></div>
<div class="a" style="left:60px;top:480px;width:150px;height:32px;border:1px solid #d0d0d0;background:#fff"></div>
<div class="a t " style="left:71px;top:492.00px;font-size:12.6px;color:#888;letter-spacing:-0.393px">Find Resource</div>
<div class="a t " style="left:230.4px;top:490.00px;font-size:13.4px;color:#555;letter-spacing:-0.313px">Resources</div>
<svg class="a" style="left:300.5px;top:494.0px;" width="10" height="5" viewBox="0 0 10 5"><path d="M0 0H10L5.0 5Z" fill="#555"/></svg>
<div class="a t " style="left:342.3px;top:490.00px;font-size:13.2px;color:#555;letter-spacing:-0.076px">Find Resources</div>
<svg class="a" style="left:443.0px;top:494.0px;" width="10" height="5" viewBox="0 0 10 5"><path d="M0 0H10L5.0 5Z" fill="#555"/></svg>
<div class="a t " style="left:485.1px;top:490.00px;font-size:13.1px;color:#555;letter-spacing:-0.020px">Replace Resource</div>
<svg class="a" style="left:620px;top:488px;" width="17" height="17" viewBox="0 0 17 17"><rect x="0.6" y="0.6" width="15.8" height="15.8" fill="none" stroke="#888" stroke-width="1.1"/><path d="M0.6 5.5H16.4M0.6 11H16.4M5.5 0.6V16.4M11 5.5V16.4" fill="none" stroke="#888" stroke-width="1.1"/></svg>
<svg class="a" style="left:645.0px;top:494.0px;" width="10" height="5" viewBox="0 0 10 5"><path d="M0 0H10L5.0 5Z" fill="#555"/></svg>
<svg class="a" style="left:681px;top:488px;" width="17" height="17" viewBox="0 0 17 17"><path d="M0.8 1H16.2L10 8.5V16L7 14V8.5Z" fill="none" stroke="#888" stroke-width="1.1" stroke-linejoin="round"/></svg>
<svg class="a" style="left:706.0px;top:494.0px;" width="10" height="5" viewBox="0 0 10 5"><path d="M0 0H10L5.0 5Z" fill="#555"/></svg>
<svg class="a" style="left:742px;top:488px;" width="16" height="16" viewBox="0 0 16 16"><path d="M0.6 0V15.4H16" fill="none" stroke="#888" stroke-width="1.1"/><path d="M2.5 13V8L6 4.5L9.5 9L13 3.5L15.5 6V13Z" fill="none" stroke="#888" stroke-width="1.1"/><path d="M2.5 11L6 8L9.5 11.5L15.5 9" fill="none" stroke="#888" stroke-width="1"/></svg>
<svg class="a" style="left:767.0px;top:494.0px;" width="10" height="5" viewBox="0 0 10 5"><path d="M0 0H10L5.0 5Z" fill="#555"/></svg>
<div class="a" style="left:52px;top:518px;width:935px;height:1px;background:#c9c9c9"></div>
<div class="a" style="left:52px;top:551px;width:935px;height:2px;background:#c9c9c9"></div>
<div class="a" style="left:52px;top:519px;width:1px;height:32px;background:#c9c9c9"></div>
<div class="a" style="left:84px;top:519px;width:1px;height:32px;background:#c9c9c9"></div>
<div class="a" style="left:485px;top:519px;width:1px;height:32px;background:#c9c9c9"></div>
<div class="a" style="left:635px;top:519px;width:1px;height:32px;background:#c9c9c9"></div>
<div class="a" style="left:52px;top:589px;width:733px;height:1px;background:#e2e2e2"></div>
<div class="a" style="left:52px;top:623px;width:733px;height:1px;background:#e2e2e2"></div>
<div class="a" style="left:52px;top:658px;width:733px;height:1px;background:#e2e2e2"></div>
<div class="a" style="left:52px;top:692px;width:733px;height:1px;background:#e2e2e2"></div>
<div class="a" style="left:52px;top:727px;width:733px;height:1px;background:#e2e2e2"></div>
<div class="a" style="left:52px;top:761px;width:733px;height:1px;background:#e2e2e2"></div>
<div class="a" style="left:52px;top:796px;width:733px;height:1px;background:#e2e2e2"></div>
<div class="a" style="left:52px;top:555px;width:1px;height:241px;background:#e2e2e2"></div>
<div class="a" style="left:84px;top:555px;width:1px;height:241px;background:#e2e2e2"></div>
<div class="a" style="left:385px;top:555px;width:1px;height:241px;background:#e2e2e2"></div>
<div class="a" style="left:485px;top:555px;width:1px;height:241px;background:#e2e2e2"></div>
<div class="a" style="left:635px;top:555px;width:1px;height:241px;background:#e2e2e2"></div>
<div class="a" style="left:785px;top:555px;width:1px;height:241px;background:#e2e2e2"></div>
<div class="cb" style="left:60px;top:528px"></div>
<div class="a t " style="left:95.4px;top:531.00px;font-size:12.6px;color:#606060;letter-spacing:-0.023px">Name</div>
<div class="a t " style="left:495px;top:531.00px;font-size:12.4px;color:#606060;letter-spacing:0.018px">Business Unit</div>
<div class="a t " style="left:645px;top:531.00px;font-size:12.4px;color:#606060;letter-spacing:0.004px">Role</div>
<div class="cb" style="left:60px;top:564px"></div>
<svg class="a" style="left:96.45px;top:566.5px;" width="5.5" height="9" viewBox="0 0 5.5 9"><path d="M0 0L5.5 4.5L0 9Z" fill="#555"/></svg>
<svg class="a" style="left:118px;top:564px;" width="17" height="18" viewBox="0 0 17 18"><circle cx="8.5" cy="2.2" r="0.9" fill="#3a3a3a"/><path d="M8.5 2.5V5.2" stroke="#3a3a3a" stroke-width="1"/><rect x="4.5" y="5.5" width="8.5" height="5" rx="1.6" fill="none" stroke="#3a3a3a" stroke-width="1.1"/><path d="M3.6 7.2V8.8M13.9 7.2V8.8" stroke="#3a3a3a" stroke-width="1.1"/><circle cx="7" cy="8" r="0.6" fill="#3a3a3a"/><circle cx="10.5" cy="8" r="0.6" fill="#3a3a3a"/><path d="M6.5 10.5V12.5M10.5 10.5V12.5" stroke="#3a3a3a" stroke-width="0.9"/><path d="M2.5 17V12.6H14.5V17" fill="none" stroke="#3a3a3a" stroke-width="1.1"/></svg>
<div class="a t b" style="left:145px;top:566.00px;font-size:12px;;letter-spacing:-0.148px">Developer</div>
<div class="a t b" style="left:495px;top:566.00px;font-size:12px;;letter-spacing:-0.054px">Product Development</div>
<div class="a t b" style="left:645px;top:566.00px;font-size:12px;;letter-spacing:-0.092px">Developer</div>
<div class="cb" style="left:60px;top:599px"></div>
<svg class="a" style="left:96.45px;top:601.5px;" width="5.5" height="9" viewBox="0 0 5.5 9"><path d="M0 0L5.5 4.5L0 9Z" fill="#555"/></svg>
<svg class="a" style="left:118px;top:599px;" width="16" height="17" viewBox="0 0 16 17"><circle cx="8" cy="5" r="4" fill="none" stroke="#444" stroke-width="1.2"/><path d="M1 17C1 12.5 4 10 8 10C12 10 15 12.5 15 17" fill="none" stroke="#444" stroke-width="1.2"/></svg>
<div class="a t b" style="left:145px;top:601.00px;font-size:12px;;letter-spacing:-0.317px">Toby Stephens</div>
<div class="a t b" style="left:495px;top:601.00px;font-size:12px;;letter-spacing:-0.054px">Product Development</div>
<div class="a t b" style="left:645px;top:601.00px;font-size:12px;;letter-spacing:-0.092px">Developer</div>
<div class="cb" style="left:60px;top:633px"></div>
<svg class="a" style="left:96.45px;top:635.5px;" width="5.5" height="9" viewBox="0 0 5.5 9"><path d="M0 0L5.5 4.5L0 9Z" fill="#555"/></svg>
<svg class="a" style="left:118px;top:633px;" width="17" height="18" viewBox="0 0 17 18"><circle cx="8.5" cy="2.2" r="0.9" fill="#3a3a3a"/><path d="M8.5 2.5V5.2" stroke="#3a3a3a" stroke-width="1"/><rect x="4.5" y="5.5" width="8.5" height="5" rx="1.6" fill="none" stroke="#3a3a3a" stroke-width="1.1"/><path d="M3.6 7.2V8.8M13.9 7.2V8.8" stroke="#3a3a3a" stroke-width="1.1"/><circle cx="7" cy="8" r="0.6" fill="#3a3a3a"/><circle cx="10.5" cy="8" r="0.6" fill="#3a3a3a"/><path d="M6.5 10.5V12.5M10.5 10.5V12.5" stroke="#3a3a3a" stroke-width="0.9"/><path d="M2.5 17V12.6H14.5V17" fill="none" stroke="#3a3a3a" stroke-width="1.1"/></svg>
<div class="a t b" style="left:145px;top:635.00px;font-size:12px;;letter-spacing:-0.118px">Oscar Martinez</div>
<div class="a t b" style="left:495px;top:635.00px;font-size:12px;;letter-spacing:0.057px">Marketing</div>
<div class="a t b" style="left:645px;top:635.00px;font-size:12px;;letter-spacing:-0.092px">Developer</div>
<div class="cb" style="left:60px;top:668px"></div>
<svg class="a" style="left:96.45px;top:670.5px;" width="5.5" height="9" viewBox="0 0 5.5 9"><path d="M0 0L5.5 4.5L0 9Z" fill="#555"/></svg>
<svg class="a" style="left:118px;top:668px;" width="17" height="18" viewBox="0 0 17 18"><circle cx="8.5" cy="2.2" r="0.9" fill="#3a3a3a"/><path d="M8.5 2.5V5.2" stroke="#3a3a3a" stroke-width="1"/><rect x="4.5" y="5.5" width="8.5" height="5" rx="1.6" fill="none" stroke="#3a3a3a" stroke-width="1.1"/><path d="M3.6 7.2V8.8M13.9 7.2V8.8" stroke="#3a3a3a" stroke-width="1.1"/><circle cx="7" cy="8" r="0.6" fill="#3a3a3a"/><circle cx="10.5" cy="8" r="0.6" fill="#3a3a3a"/><path d="M6.5 10.5V12.5M10.5 10.5V12.5" stroke="#3a3a3a" stroke-width="0.9"/><path d="M2.5 17V12.6H14.5V17" fill="none" stroke="#3a3a3a" stroke-width="1.1"/></svg>
<div class="a t b" style="left:145px;top:670.00px;font-size:12px;;letter-spacing:-0.056px">Thomas Middleditch</div>
<div class="a t b" style="left:495px;top:670.00px;font-size:12px;;letter-spacing:-0.185px">Applications</div>
<div class="a t b" style="left:645px;top:670.00px;font-size:12px;;letter-spacing:-0.092px">Developer</div>
<div class="cb" style="left:60px;top:702px"></div>
<svg class="a" style="left:96.45px;top:704.5px;" width="5.5" height="9" viewBox="0 0 5.5 9"><path d="M0 0L5.5 4.5L0 9Z" fill="#555"/></svg>
<svg class="a" style="left:118px;top:702px;" width="17" height="18" viewBox="0 0 17 18"><circle cx="8.5" cy="2.2" r="0.9" fill="#3a3a3a"/><path d="M8.5 2.5V5.2" stroke="#3a3a3a" stroke-width="1"/><rect x="4.5" y="5.5" width="8.5" height="5" rx="1.6" fill="none" stroke="#3a3a3a" stroke-width="1.1"/><path d="M3.6 7.2V8.8M13.9 7.2V8.8" stroke="#3a3a3a" stroke-width="1.1"/><circle cx="7" cy="8" r="0.6" fill="#3a3a3a"/><circle cx="10.5" cy="8" r="0.6" fill="#3a3a3a"/><path d="M6.5 10.5V12.5M10.5 10.5V12.5" stroke="#3a3a3a" stroke-width="0.9"/><path d="M2.5 17V12.6H14.5V17" fill="none" stroke="#3a3a3a" stroke-width="1.1"/></svg>
<div class="a t b" style="left:145px;top:704.00px;font-size:12px;;letter-spacing:-0.222px">Jared Dunn</div>
<div class="a t b" style="left:395px;top:704.00px;font-size:12px;;letter-spacing:-0.210px">15%</div>
<div class="a t b" style="left:495px;top:704.00px;font-size:12px;;letter-spacing:-0.054px">Product Development</div>
<div class="a t b" style="left:645px;top:704.00px;font-size:12px;;letter-spacing:-0.092px">Developer</div>
<div class="cb" style="left:60px;top:737px"></div>
<svg class="a" style="left:96.45px;top:739.5px;" width="5.5" height="9" viewBox="0 0 5.5 9"><path d="M0 0L5.5 4.5L0 9Z" fill="#555"/></svg>
<svg class="a" style="left:118px;top:737px;" width="17" height="18" viewBox="0 0 17 18"><circle cx="8.5" cy="2.2" r="0.9" fill="#3a3a3a"/><path d="M8.5 2.5V5.2" stroke="#3a3a3a" stroke-width="1"/><rect x="4.5" y="5.5" width="8.5" height="5" rx="1.6" fill="none" stroke="#3a3a3a" stroke-width="1.1"/><path d="M3.6 7.2V8.8M13.9 7.2V8.8" stroke="#3a3a3a" stroke-width="1.1"/><circle cx="7" cy="8" r="0.6" fill="#3a3a3a"/><circle cx="10.5" cy="8" r="0.6" fill="#3a3a3a"/><path d="M6.5 10.5V12.5M10.5 10.5V12.5" stroke="#3a3a3a" stroke-width="0.9"/><path d="M2.5 17V12.6H14.5V17" fill="none" stroke="#3a3a3a" stroke-width="1.1"/></svg>
<div class="a t b" style="left:145px;top:739.00px;font-size:12px;;letter-spacing:-0.069px">Holly Flax</div>
<div class="a t b" style="left:395px;top:739.00px;font-size:12px;;letter-spacing:-0.115px">-8%</div>
<div class="a t b" style="left:495px;top:739.00px;font-size:12px;;letter-spacing:-0.185px">Applications</div>
<div class="a t b" style="left:645px;top:739.00px;font-size:12px;;letter-spacing:-0.092px">Developer</div>
<div class="cb" style="left:60px;top:771px"></div>
<svg class="a" style="left:96.45px;top:773.5px;" width="5.5" height="9" viewBox="0 0 5.5 9"><path d="M0 0L5.5 4.5L0 9Z" fill="#555"/></svg>
<svg class="a" style="left:118px;top:771px;" width="17" height="18" viewBox="0 0 17 18"><circle cx="8.5" cy="2.2" r="0.9" fill="#3a3a3a"/><path d="M8.5 2.5V5.2" stroke="#3a3a3a" stroke-width="1"/><rect x="4.5" y="5.5" width="8.5" height="5" rx="1.6" fill="none" stroke="#3a3a3a" stroke-width="1.1"/><path d="M3.6 7.2V8.8M13.9 7.2V8.8" stroke="#3a3a3a" stroke-width="1.1"/><circle cx="7" cy="8" r="0.6" fill="#3a3a3a"/><circle cx="10.5" cy="8" r="0.6" fill="#3a3a3a"/><path d="M6.5 10.5V12.5M10.5 10.5V12.5" stroke="#3a3a3a" stroke-width="0.9"/><path d="M2.5 17V12.6H14.5V17" fill="none" stroke="#3a3a3a" stroke-width="1.1"/></svg>
<div class="a t b" style="left:145px;top:773.00px;font-size:12px;;letter-spacing:-0.336px">Erlich Bachman</div>
<div class="a t b" style="left:395px;top:773.00px;font-size:12px;;letter-spacing:0.146px">-15%</div>
<div class="a t b" style="left:495px;top:773.00px;font-size:12px;">IT</div>
<div class="a t b" style="left:645px;top:773.00px;font-size:12px;;letter-spacing:-0.092px">Developer</div>
<div class="a" style="left:987px;top:518px;width:2px;height:370px;background:#c8c8c8"></div>
<div class="a" style="left:989px;top:518px;width:10px;height:370px;background:#f2f2f2"></div>
<div class="a" style="left:999px;top:518px;width:2px;height:370px;background:#c8c8c8"></div>
<div class="a" style="left:1001px;top:518px;width:916px;height:1px;background:#c9c9c9"></div>
<div class="a" style="left:1001px;top:551px;width:916px;height:2px;background:#c9c9c9"></div>
<div class="a" style="left:1101px;top:519px;width:1px;height:32px;background:#c9c9c9"></div>
<div class="a" style="left:1101px;top:555px;width:1px;height:241px;background:#e2e2e2"></div>
<div class="a" style="left:1201px;top:519px;width:1px;height:32px;background:#c9c9c9"></div>
<div class="a" style="left:1201px;top:555px;width:1px;height:241px;background:#e2e2e2"></div>
<div class="a" style="left:1301px;top:519px;width:1px;height:32px;background:#c9c9c9"></div>
<div class="a" style="left:1301px;top:555px;width:1px;height:241px;background:#e2e2e2"></div>
<div class="a" style="left:1401px;top:519px;width:1px;height:32px;background:#c9c9c9"></div>
<div class="a" style="left:1401px;top:555px;width:1px;height:241px;background:#e2e2e2"></div>
<div class="a" style="left:1501px;top:519px;width:1px;height:32px;background:#c9c9c9"></div>
<div class="a" style="left:1501px;top:555px;width:1px;height:241px;background:#e2e2e2"></div>
<div class="a" style="left:1601px;top:519px;width:1px;height:32px;background:#c9c9c9"></div>
<div class="a" style="left:1601px;top:555px;width:1px;height:241px;background:#e2e2e2"></div>
<div class="a" style="left:1701px;top:519px;width:1px;height:32px;background:#c9c9c9"></div>
<div class="a" style="left:1701px;top:555px;width:1px;height:241px;background:#e2e2e2"></div>
<div class="a" style="left:1801px;top:519px;width:1px;height:32px;background:#c9c9c9"></div>
<div class="a" style="left:1801px;top:555px;width:1px;height:241px;background:#e2e2e2"></div>
<div class="a" style="left:1901px;top:519px;width:1px;height:32px;background:#c9c9c9"></div>
<div class="a" style="left:1901px;top:555px;width:1px;height:241px;background:#e2e2e2"></div>
<div class="a t " style="left:947.5px;width:200px;text-align:center;top:531.00px;font-size:12.3px;color:#606060">Jan 2024</div>
<div class="a t " style="left:1047.5px;width:200px;text-align:center;top:531.00px;font-size:12.3px;color:#606060">Feb 2024</div>
<div class="a t " style="left:1147.5px;width:200px;text-align:center;top:531.00px;font-size:12.3px;color:#606060">Mar 2024</div>
<div class="a t " style="left:1247.5px;width:200px;text-align:center;top:531.00px;font-size:12.3px;color:#606060">Apr 2024</div>
<div class="a t " style="left:1347.5px;width:200px;text-align:center;top:531.00px;font-size:12.3px;color:#606060">May 2024</div>
<div class="a t " style="left:1447.5px;width:200px;text-align:center;top:531.00px;font-size:12.3px;color:#606060">Jun 2024</div>
<div class="a t " style="left:1547.5px;width:200px;text-align:center;top:531.00px;font-size:12.3px;color:#606060">Jul 2024</div>
<div class="a t " style="left:1647.5px;width:200px;text-align:center;top:531.00px;font-size:12.3px;color:#606060">Aug 2024</div>
<div class="a t " style="left:1747.5px;width:200px;text-align:center;top:531.00px;font-size:12.3px;color:#606060">Sep 2024</div>
<div class="a" style="left:1001px;top:590px;width:100px;height:34px;background:#2dba7c"></div>
<div class="a t b" style="right:830px;top:601.00px;font-size:12px;letter-spacing:0">184.00</div>
<div class="a" style="left:1102px;top:590px;width:99px;height:34px;background:#2dba7c"></div>
<div class="a t b" style="right:730px;top:601.00px;font-size:12px;letter-spacing:0">51.00</div>
<div class="a" style="left:1202px;top:590px;width:99px;height:34px;background:#2dba7c"></div>
<div class="a t b" style="right:630px;top:601.00px;font-size:12px;letter-spacing:0">25.86</div>
<div class="a" style="left:1302px;top:590px;width:99px;height:34px;background:#ffc300"></div>
<div class="a t b" style="right:530px;top:601.00px;font-size:12px;letter-spacing:0">-29.33</div>
<div class="a" style="left:1402px;top:590px;width:99px;height:34px;background:#f8716a"></div>
<div class="a t b" style="right:430px;top:601.00px;font-size:12px;letter-spacing:0">-82.76</div>
<div class="a" style="left:1502px;top:590px;width:99px;height:34px;background:#f8716a"></div>
<div class="a t b" style="right:330px;top:601.00px;font-size:12px;letter-spacing:0">-49.33</div>
<div class="a" style="left:1602px;top:590px;width:99px;height:34px;background:#f8716a"></div>
<div class="a t b" style="right:230px;top:601.00px;font-size:12px;letter-spacing:0">-71.10</div>
<div class="a" style="left:1702px;top:590px;width:99px;height:34px;background:#2dba7c"></div>
<div class="a t b" style="right:130px;top:601.00px;font-size:12px;letter-spacing:0">136.00</div>
<div class="a" style="left:1802px;top:590px;width:99px;height:34px;background:#2dba7c"></div>
<div class="a t b" style="right:30px;top:601.00px;font-size:12px;letter-spacing:0">128.00</div>
<div class="a" style="left:1902px;top:590px;width:15px;height:34px;background:#2dba7c"></div>
<div class="a" style="left:1001px;top:589px;width:916px;height:1px;background:#f4f4f4"></div>
<div class="a" style="left:1001px;top:624px;width:100px;height:34px;background:#2dba7c"></div>
<div class="a t b" style="right:830px;top:635.00px;font-size:12px;letter-spacing:0">184.00</div>
<div class="a" style="left:1102px;top:624px;width:99px;height:34px;background:#2dba7c"></div>
<div class="a t b" style="right:730px;top:635.00px;font-size:12px;letter-spacing:0">168.00</div>
<div class="a" style="left:1202px;top:624px;width:99px;height:34px;background:#2dba7c"></div>
<div class="a t b" style="right:630px;top:635.00px;font-size:12px;letter-spacing:0">130.86</div>
<div class="a" style="left:1302px;top:624px;width:99px;height:34px;background:#2dba7c"></div>
<div class="a t b" style="right:530px;top:635.00px;font-size:12px;letter-spacing:0">70.67</div>
<div class="a" style="left:1402px;top:624px;width:99px;height:34px;background:#f8716a"></div>
<div class="a t b" style="right:430px;top:635.00px;font-size:12px;letter-spacing:0">-42.76</div>
<div class="a" style="left:1502px;top:624px;width:99px;height:34px;background:#f8716a"></div>
<div class="a t b" style="right:330px;top:635.00px;font-size:12px;letter-spacing:0">-115.15</div>
<div class="a" style="left:1602px;top:624px;width:99px;height:34px;background:#fffb7b"></div>
<div class="a t b" style="right:230px;top:635.00px;font-size:12px;letter-spacing:0">-1.61</div>
<div class="a" style="left:1702px;top:624px;width:99px;height:34px;background:#2dba7c"></div>
<div class="a t b" style="right:130px;top:635.00px;font-size:12px;letter-spacing:0">72.00</div>
<div class="a" style="left:1802px;top:624px;width:99px;height:34px;background:#f8716a"></div>
<div class="a t b" style="right:30px;top:635.00px;font-size:12px;letter-spacing:0">-92.00</div>
<div class="a" style="left:1902px;top:624px;width:15px;height:34px;background:#2dba7c"></div>
<div class="a" style="left:1001px;top:623px;width:916px;height:1px;background:#f4f4f4"></div>
<div class="a" style="left:1001px;top:659px;width:100px;height:34px;background:#2dba7c"></div>
<div class="a t b" style="right:830px;top:670.00px;font-size:12px;letter-spacing:0">184.00</div>
<div class="a" style="left:1102px;top:659px;width:99px;height:34px;background:#2dba7c"></div>
<div class="a t b" style="right:730px;top:670.00px;font-size:12px;letter-spacing:0">168.00</div>
<div class="a" style="left:1202px;top:659px;width:99px;height:34px;background:#2dba7c"></div>
<div class="a t b" style="right:630px;top:670.00px;font-size:12px;letter-spacing:0">130.86</div>
<div class="a" style="left:1302px;top:659px;width:99px;height:34px;background:#2dba7c"></div>
<div class="a t b" style="right:530px;top:670.00px;font-size:12px;letter-spacing:0">70.67</div>
<div class="a" style="left:1402px;top:659px;width:99px;height:34px;background:#2dba7c"></div>
<div class="a t b" style="right:430px;top:670.00px;font-size:12px;letter-spacing:0">37.24</div>
<div class="a" style="left:1502px;top:659px;width:99px;height:34px;background:#f8716a"></div>
<div class="a t b" style="right:330px;top:670.00px;font-size:12px;letter-spacing:0">-101.33</div>
<div class="a" style="left:1602px;top:659px;width:99px;height:34px;background:#f8716a"></div>
<div class="a t b" style="right:230px;top:670.00px;font-size:12px;letter-spacing:0">-38.76</div>
<div class="a" style="left:1702px;top:659px;width:99px;height:34px;background:#ffc300"></div>
<div class="a t b" style="right:130px;top:670.00px;font-size:12px;letter-spacing:0">-29.00</div>
<div class="a" style="left:1802px;top:659px;width:99px;height:34px;background:#2dba7c"></div>
<div class="a t b" style="right:30px;top:670.00px;font-size:12px;letter-spacing:0">2.00</div>
<div class="a" style="left:1902px;top:659px;width:15px;height:34px;background:#2dba7c"></div>
<div class="a" style="left:1001px;top:658px;width:916px;height:1px;background:#f4f4f4"></div>
<div class="a" style="left:1001px;top:693px;width:100px;height:34px;background:#2dba7c"></div>
<div class="a t b" style="right:830px;top:704.00px;font-size:12px;letter-spacing:0">184.00</div>
<div class="a" style="left:1102px;top:693px;width:99px;height:34px;background:#2dba7c"></div>
<div class="a t b" style="right:730px;top:704.00px;font-size:12px;letter-spacing:0">168.00</div>
<div class="a" style="left:1202px;top:693px;width:99px;height:34px;background:#2dba7c"></div>
<div class="a t b" style="right:630px;top:704.00px;font-size:12px;letter-spacing:0">130.86</div>
<div class="a" style="left:1302px;top:693px;width:99px;height:34px;background:#2dba7c"></div>
<div class="a t b" style="right:530px;top:704.00px;font-size:12px;letter-spacing:0">70.67</div>
<div class="a" style="left:1402px;top:693px;width:99px;height:34px;background:#ffc300"></div>
<div class="a t b" style="right:430px;top:704.00px;font-size:12px;letter-spacing:0">-22.76</div>
<div class="a" style="left:1502px;top:693px;width:99px;height:34px;background:#f8716a"></div>
<div class="a t b" style="right:330px;top:704.00px;font-size:12px;letter-spacing:0">-64.33</div>
<div class="a" style="left:1602px;top:693px;width:99px;height:34px;background:#2dba7c"></div>
<div class="a t b" style="right:230px;top:704.00px;font-size:12px;letter-spacing:0">33.57</div>
<div class="a" style="left:1702px;top:693px;width:99px;height:34px;background:#f8716a"></div>
<div class="a t b" style="right:130px;top:704.00px;font-size:12px;letter-spacing:0">-172.71</div>
<div class="a" style="left:1802px;top:693px;width:99px;height:34px;background:#f8716a"></div>
<div class="a t b" style="right:30px;top:704.00px;font-size:12px;letter-spacing:0">-122.00</div>
<div class="a" style="left:1902px;top:693px;width:15px;height:34px;background:#fffb7b"></div>
<div class="a" style="left:1001px;top:692px;width:916px;height:1px;background:#f4f4f4"></div>
<div class="a" style="left:1001px;top:728px;width:100px;height:34px;background:#2dba7c"></div>
<div class="a t b" style="right:830px;top:739.00px;font-size:12px;letter-spacing:0">124.00</div>
<div class="a" style="left:1102px;top:728px;width:99px;height:34px;background:#2dba7c"></div>
<div class="a t b" style="right:730px;top:739.00px;font-size:12px;letter-spacing:0">88.00</div>
<div class="a" style="left:1202px;top:728px;width:99px;height:34px;background:#2dba7c"></div>
<div class="a t b" style="right:630px;top:739.00px;font-size:12px;letter-spacing:0">30.86</div>
<div class="a" style="left:1302px;top:728px;width:99px;height:34px;background:#ffc300"></div>
<div class="a t b" style="right:530px;top:739.00px;font-size:12px;letter-spacing:0">-29.33</div>
<div class="a" style="left:1402px;top:728px;width:99px;height:34px;background:#f8716a"></div>
<div class="a t b" style="right:430px;top:739.00px;font-size:12px;letter-spacing:0">-62.76</div>
<div class="a" style="left:1502px;top:728px;width:99px;height:34px;background:#f8716a"></div>
<div class="a t b" style="right:330px;top:739.00px;font-size:12px;letter-spacing:0">-49.33</div>
<div class="a" style="left:1602px;top:728px;width:99px;height:34px;background:#2dba7c"></div>
<div class="a t b" style="right:230px;top:739.00px;font-size:12px;letter-spacing:0">76.57</div>
<div class="a" style="left:1702px;top:728px;width:99px;height:34px;background:#2dba7c"></div>
<div class="a t b" style="right:130px;top:739.00px;font-size:12px;letter-spacing:0">60.00</div>
<div class="a" style="left:1802px;top:728px;width:99px;height:34px;background:#2dba7c"></div>
<div class="a t b" style="right:30px;top:739.00px;font-size:12px;letter-spacing:0">48.00</div>
<div class="a" style="left:1902px;top:728px;width:15px;height:34px;background:#2dba7c"></div>
<div class="a" style="left:1001px;top:727px;width:916px;height:1px;background:#f4f4f4"></div>
<div class="a" style="left:1001px;top:762px;width:100px;height:35px;background:#2dba7c"></div>
<div class="a t b" style="right:830px;top:773.00px;font-size:12px;letter-spacing:0">92.00</div>
<div class="a" style="left:1102px;top:762px;width:99px;height:35px;background:#2dba7c"></div>
<div class="a t b" style="right:730px;top:773.00px;font-size:12px;letter-spacing:0">84.00</div>
<div class="a" style="left:1202px;top:762px;width:99px;height:35px;background:#fffb7b"></div>
<div class="a t b" style="right:630px;top:773.00px;font-size:12px;letter-spacing:0">-13.14</div>
<div class="a" style="left:1302px;top:762px;width:99px;height:35px;background:#f8716a"></div>
<div class="a t b" style="right:530px;top:773.00px;font-size:12px;letter-spacing:0">-94.57</div>
<div class="a" style="left:1402px;top:762px;width:99px;height:35px;background:#f8716a"></div>
<div class="a t b" style="right:430px;top:773.00px;font-size:12px;letter-spacing:0">-57.24</div>
<div class="a" style="left:1502px;top:762px;width:99px;height:35px;background:#2dba7c"></div>
<div class="a t b" style="right:330px;top:773.00px;font-size:12px;letter-spacing:0">2.67</div>
<div class="a" style="left:1602px;top:762px;width:99px;height:35px;background:#f8716a"></div>
<div class="a t b" style="right:230px;top:773.00px;font-size:12px;letter-spacing:0">-186.00</div>
<div class="a" style="left:1702px;top:762px;width:99px;height:35px;background:#f8716a"></div>
<div class="a t b" style="right:130px;top:773.00px;font-size:12px;letter-spacing:0">-102.00</div>
<div class="a" style="left:1802px;top:762px;width:99px;height:35px;background:#f8716a"></div>
<div class="a t b" style="right:30px;top:773.00px;font-size:12px;letter-spacing:0">-44.00</div>
<div class="a" style="left:1902px;top:762px;width:15px;height:35px;background:#fffb7b"></div>
<div class="a" style="left:1001px;top:761px;width:916px;height:1px;background:#f4f4f4"></div>
<div class="a" style="left:1001px;top:880px;width:649px;height:8px;background:#d4d4d4;border-radius:4px"></div>
<div class="a" style="left:1842px;top:815px;width:50px;height:50px;border-radius:50%;background:#03a0e9;box-shadow:0 2px 4px rgba(0,0,0,0.25)"></div>
<svg class="a" style="left:1855px;top:829px;" width="24" height="22" viewBox="0 0 24 22"><path d="M11.75 2.5V6" stroke="#fff" stroke-width="1.4"/><circle cx="11.75" cy="2.2" r="1.2" fill="#fff"/><rect x="5.6" y="6.3" width="12.3" height="9" rx="1.8" fill="none" stroke="#fff" stroke-width="1.5"/><path d="M4.2 9.3V12.3M19.3 9.3V12.3" stroke="#fff" stroke-width="1.5"/><path d="M8.5 9.6H10.3M13.2 9.6H15" stroke="#fff" stroke-width="1.3"/><path d="M8.8 11.9Q11.75 14 14.7 11.9M9.5 15L9.7 18.5L12.5 15.2" fill="none" stroke="#fff" stroke-width="1.3"/></svg>
<div class="a" style="left:1882px;top:815px;width:20px;height:20px;border-radius:50%;background:#fff;box-shadow:0 1px 3px rgba(0,0,0,0.3)"></div>
<svg class="a" style="left:1886px;top:819px;" width="12" height="12" viewBox="0 0 12 12"><path d="M3.2 3.5A4.3 4.3 0 1 0 8.8 3.5" fill="none" stroke="#03a0e9" stroke-width="1.6"/><path d="M6 1V6" stroke="#03a0e9" stroke-width="1.6"/></svg>
<div class="a" style="left:331px;top:511px;width:156px;height:194px;background:#fff;border:1px solid #d6d6d6;box-shadow:0 1px 3px rgba(0,0,0,0.08)"></div>
<div class="a t " style="left:367.2px;top:524.00px;font-size:12px;color:#444;letter-spacing:-0.073px">Best Match</div>
<div class="a t " style="left:367.2px;top:556.00px;font-size:12px;color:#444;letter-spacing:-0.191px">My Resources</div>
<div class="a t " style="left:367.2px;top:588.00px;font-size:12px;color:#444;letter-spacing:-0.034px">Search by Name</div>
<svg class="a" style="left:471.0px;top:588.0px;" width="5" height="10" viewBox="0 0 5 10"><path d="M0 0L5 5.0L0 10Z" fill="#777"/></svg>
<div class="a t " style="left:367.2px;top:620.00px;font-size:12px;color:#444;letter-spacing:-0.266px">Generics</div>
<div class="a t " style="left:367.2px;top:652.00px;font-size:12px;color:#444;letter-spacing:-0.231px">By Business Unit</div>
<svg class="a" style="left:471.0px;top:652.0px;" width="5" height="10" viewBox="0 0 5 10"><path d="M0 0L5 5.0L0 10Z" fill="#777"/></svg>
<div class="a t " style="left:367.2px;top:684.00px;font-size:12px;color:#444;letter-spacing:-0.290px">By Role</div>
<svg class="a" style="left:471.0px;top:684.0px;" width="5" height="10" viewBox="0 0 5 10"><path d="M0 0L5 5.0L0 10Z" fill="#777"/></svg>
<svg class="a" style="left:339px;top:521px;" width="17" height="13" viewBox="0 0 17 13"><path d="M1.5 6.5L6 11L15.5 1.5" fill="none" stroke="#8a8a8a" stroke-width="3"/></svg>
<div class="a" style="left:331px;top:512px;width:156px;height:36px;border:3px solid #ff0000"></div>
<div class="a" style="left:228px;top:53px;width:34px;height:35px;border:3px solid #ff0000"></div>
<div class="a" style="left:260px;top:87px;width:104px;height:33px;background:#6e6e6e;border-radius:3px"></div>
<div class="a t " style="left:270px;top:99.00px;font-size:12.4px;color:#fff;letter-spacing:-0.075px">Candidates List</div>
<div class="a" style="left:246px;top:88px;width:8px;height:384px;background:linear-gradient(to right,rgba(0,0,0,0.18),rgba(0,0,0,0))"></div>
<div class="a" style="left:244px;top:88px;width:2px;height:380px;background:#ff0000"></div>
<svg class="a" style="left:240.5px;top:463px;" width="8" height="11" viewBox="0 0 8 11"><path d="M0 0H8L4 11Z" fill="#ff0000"/></svg>
<div class="a" style="left:49px;top:471px;width:1871px;height:422px;border:3px solid #ff0000"></div>
<div class="a" style="left:0px;top:893px;width:1920px;height:1px;background:#444"></div>
<svg class="a" style="left:236px;top:66px;" width="24" height="28" viewBox="0 0 24 28"><path d="M8 17V4.5Q8 3 9.85 3Q11.7 3 11.7 4.5V9.5Q11.7 8.4 13.1 8.4Q14.5 8.4 14.5 9.5V10.4Q14.5 9.4 15.75 9.4Q17 9.4 17 10.6V11.2Q17 10.1 19 10.1Q21 10.1 21 12V19Q21 24 18.5 26.6H10Q8.5 25.5 6.5 22.5L3.2 18Q2.4 16.5 3.8 15.8Q5 15.3 6 16.3L8 18.5Z" fill="#fff" stroke="#111" stroke-width="1.3" stroke-linejoin="round"/><path d="M11.7 9.5V15M14.5 10.4V15M17 11V15" stroke="#111" stroke-width="1"/></svg>
</body></html>
